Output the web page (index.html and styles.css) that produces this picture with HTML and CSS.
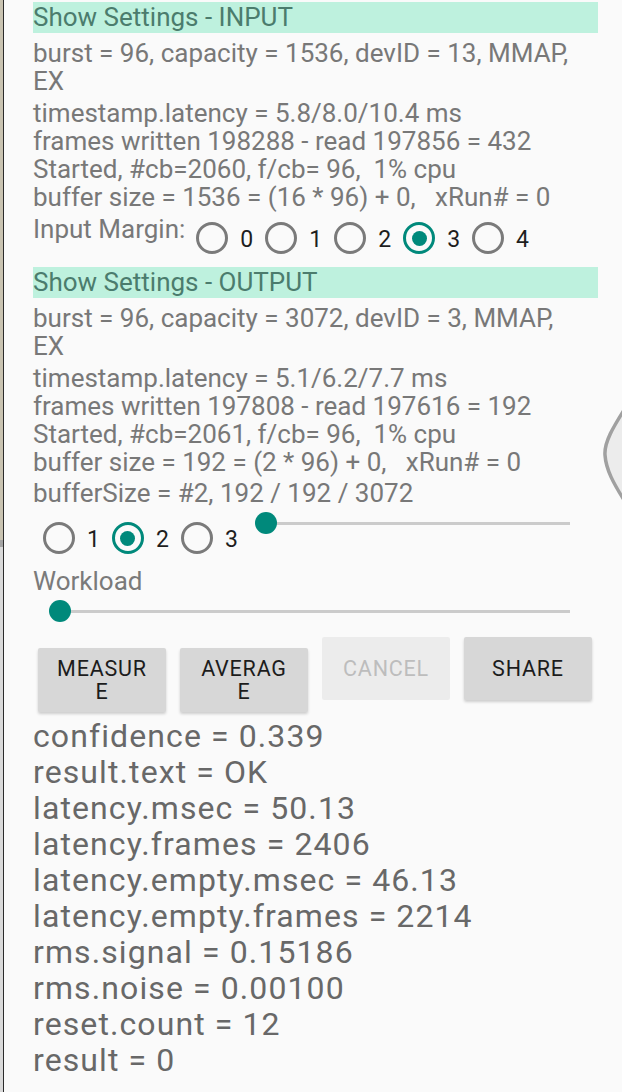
FILE: index.html
```html
<!DOCTYPE html>
<html lang="en">
<head>
<meta charset="utf-8">
<title>Latency Test</title>
<link rel="stylesheet" href="styles.css">
</head>
<body>
<div class="screen">
  <div class="edge"></div>
  <main class="main">
    <section class="sect">
      <div class="sect-head">Show Settings - INPUT</div>
      <p class="info info-first">burst = 96, capacity = 1536, devID = 13, MMAP,<br>EX</p>
      <p class="info">timestamp.latency = 5.8/8.0/10.4 ms<br>frames written 198288 - read 197856 = 432<br>Started, #cb=2060, f/cb= 96,&nbsp; 1% cpu<br>buffer size = 1536 = (16 * 96) + 0,&nbsp;&nbsp; xRun# = 0</p>
      <div class="margin-row">
        <span class="row-label">Input Margin:</span>
        <div class="radios radios-margin">
          <div class="radio"><span class="radio-ring"></span><span class="radio-text">0</span></div>
          <div class="radio"><span class="radio-ring"></span><span class="radio-text">1</span></div>
          <div class="radio"><span class="radio-ring"></span><span class="radio-text">2</span></div>
          <div class="radio is-on"><span class="radio-ring"></span><span class="radio-text">3</span></div>
          <div class="radio"><span class="radio-ring"></span><span class="radio-text">4</span></div>
        </div>
      </div>
    </section>

    <section class="sect">
      <div class="sect-head">Show Settings - OUTPUT</div>
      <p class="info info-first">burst = 96, capacity = 3072, devID = 3, MMAP,<br>EX</p>
      <p class="info">timestamp.latency = 5.1/6.2/7.7 ms<br>frames written 197808 - read 197616 = 192<br>Started, #cb=2061, f/cb= 96,&nbsp; 1% cpu<br>buffer size = 192 = (2 * 96) + 0,&nbsp;&nbsp; xRun# = 0</p>
      <p class="info info-buffer">bufferSize = #2, 192 / 192 / 3072</p>
    </section>

    <div class="buffer-row">
      <div class="radios radios-buffer">
        <div class="radio"><span class="radio-ring"></span><span class="radio-text">1</span></div>
        <div class="radio is-on"><span class="radio-ring"></span><span class="radio-text">2</span></div>
        <div class="radio"><span class="radio-ring"></span><span class="radio-text">3</span></div>
      </div>
      <div class="slider slider-buffer"><span class="slider-thumb"></span></div>
    </div>

    <div class="workload-label">Workload</div>
    <div class="slider slider-workload"><span class="slider-thumb"></span></div>

    <div class="btn-row">
      <div class="btn"><span>MEASURE</span></div>
      <div class="btn"><span>AVERAGE</span></div>
      <div class="btn is-disabled"><span>CANCEL</span></div>
      <div class="btn"><span>SHARE</span></div>
    </div>

    <div class="results">
      <div>confidence = 0.339</div>
      <div>result.text = OK</div>
      <div>latency.msec = 50.13</div>
      <div>latency.frames = 2406</div>
      <div>latency.empty.msec = 46.13</div>
      <div>latency.empty.frames = 2214</div>
      <div>rms.signal = 0.15186</div>
      <div>rms.noise = 0.00100</div>
      <div>reset.count = 12</div>
      <div>result = 0</div>
    </div>
  </main>

  <svg class="bubble" width="24" height="110" viewBox="0 0 24 110" aria-hidden="true">
    <path d="M26 8 C 16 24, 6 40, 7 53 C 8 68, 16 82, 26 98 Z" fill="#ececec" stroke="#a0a0a0" stroke-width="3.5"/>
  </svg>
</div>
</body>
</html>
```

FILE: styles.css
```css
html, body {
  margin: 0;
  padding: 0;
  background: #fafafa;
}

body {
  font-family: Roboto, "Noto Sans", "Liberation Sans", sans-serif;
}

.screen {
  position: relative;
  display: flex;
  min-height: 1092px;
  overflow: hidden;
}

.edge {
  flex: none;
  width: 3px;
  background: linear-gradient(to bottom,
    #c9c3b1 0, #c9c3b1 540px,
    #a4a4a4 540px, #a4a4a4 547px,
    #d9d9d9 547px, #d9d9d9 100%);
}

.main {
  flex: 1;
  min-width: 0;
  border-left: 1px solid #2b2b2b;
  padding: 2px 24px 0 29px;
  color: #787878;
  font-size: 26px;
  line-height: 28px;
}

.sect-head {
  height: 31px;
  line-height: 31px;
  background: #bef1de;
  color: #4b7c6d;
  white-space: nowrap;
}

.info {
  margin: 4px 0 0;
}

.info-first {
  margin-top: 6px;
}

.info-buffer {
  margin-top: 3px;
}

/* Input margin row */
.margin-row {
  display: flex;
  align-items: flex-start;
  padding-bottom: 13px;
}

.row-label {
  margin-top: 4px;
  white-space: nowrap;
}

.radios {
  display: flex;
  align-items: center;
}

.radios-margin {
  margin-left: 11px;
  margin-top: 11px;
}

.radio {
  display: flex;
  align-items: center;
}

.radio-ring {
  flex: none;
  box-sizing: border-box;
  width: 32px;
  height: 32px;
  border: 3px solid #7a7a7a;
  border-radius: 50%;
  display: flex;
  align-items: center;
  justify-content: center;
}

.radio.is-on .radio-ring {
  border-color: #00897b;
}

.radio.is-on .radio-ring::after {
  content: "";
  width: 15px;
  height: 15px;
  border-radius: 50%;
  background: #00897b;
}

.radio-text {
  margin: 0 12px;
  padding-top: 3px;
  font-size: 23px;
  line-height: 28px;
  color: #1e1e1e;
}

/* Buffer size row */
.buffer-row {
  display: flex;
  align-items: flex-start;
  padding-bottom: 13px;
}

.radios-buffer {
  margin-left: 10px;
  margin-top: 15px;
}

.slider {
  display: flex;
  align-items: center;
  height: 22px;
  background: linear-gradient(#cbcbcb, #cbcbcb) no-repeat;
  background-position: 11px 50%;
  background-size: calc(100% - 11px) 3px;
}

.slider-thumb {
  flex: none;
  width: 22px;
  height: 22px;
  border-radius: 50%;
  background: #00897b;
}

.slider-buffer {
  flex: 1;
  margin: 5px 28px 0 5px;
}

.workload-label {
  color: #7a7a7a;
}

.slider-workload {
  margin: 5px 28px 0 16px;
}

/* Buttons */
.btn-row {
  display: flex;
  align-items: baseline;
  gap: 14px;
  margin: 15px 0 0 5px;
}

.btn {
  flex: none;
  box-sizing: border-box;
  width: 128px;
  min-height: 63px;
  padding: 9px 16px;
  display: flex;
  align-items: center;
  justify-content: center;
  text-align: center;
  font-size: 21.5px;
  line-height: 23px;
  letter-spacing: 0.8px;
  color: #1c1c1c;
  background: #d7d7d7;
  border-radius: 2px;
  box-shadow: 0 2px 3px rgba(0, 0, 0, 0.18);
  word-break: break-all;
}

.btn.is-disabled {
  background: #ececec;
  color: #bdbdbd;
  box-shadow: none;
}

/* Results */
.results {
  margin-top: 6px;
  font-size: 32px;
  line-height: 36px;
  letter-spacing: 1.1px;
  color: #686868;
}

/* Partial overlay shape on the right edge */
.bubble {
  position: absolute;
  top: 402px;
  right: 0;
}
```
